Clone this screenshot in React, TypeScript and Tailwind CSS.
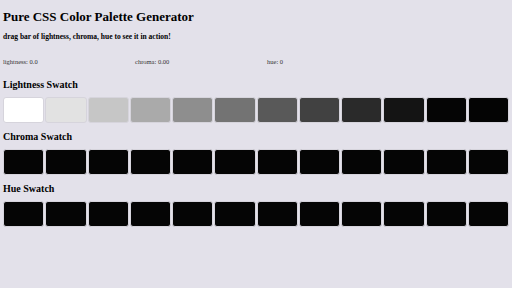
import React from "react";

const lightness = ["#ffffff", "#e2e2e2", "#c6c6c6", "#aaaaaa", "#8e8e8e", "#737373", "#595959", "#414141", "#2a2a2a", "#141414", "#050505", "#040404"];
const black = Array.from({ length: 12 }, () => "#050505");

function Row({ colors }: { colors: string[] }) {
  return (
    <div className="grid grid-cols-12 gap-[1px] h-[26px]">
      {colors.map((c, i) => (
        <div key={i} className="rounded-[3px] border border-[#d6d4dc]" style={{ backgroundColor: c }} />
      ))}
    </div>
  );
}

export default function App() {
  return (
    <div className="w-[512px] h-[288px] bg-[#e3e1ea] px-[3px] text-black" style={{ fontFamily: '"Liberation Serif", "Times New Roman", serif' }}>
      <h1 className="text-[13px] font-bold leading-none pt-[10px]">Pure CSS Color Palette Generator</h1>
      <p className="text-[7.5px] font-bold leading-none mt-[10px]">drag bar of lightness, chroma, hue to see it in action!</p>
      <div className="grid grid-cols-[132px_132px_132px] text-[6.5px] text-[#333] leading-none mt-[18px]">
        <span>lightness: 0.0</span>
        <span>chroma: 0.00</span>
        <span>hue: 0</span>
      </div>
      <h2 className="text-[10px] font-bold leading-none mt-[15px] mb-[7px]">Lightness Swatch</h2>
      <Row colors={lightness} />
      <h2 className="text-[10px] font-bold leading-none mt-[9px] mb-[7px]">Chroma Swatch</h2>
      <Row colors={black} />
      <h2 className="text-[10px] font-bold leading-none mt-[9px] mb-[7px]">Hue Swatch</h2>
      <Row colors={black} />
    </div>
  );
}
